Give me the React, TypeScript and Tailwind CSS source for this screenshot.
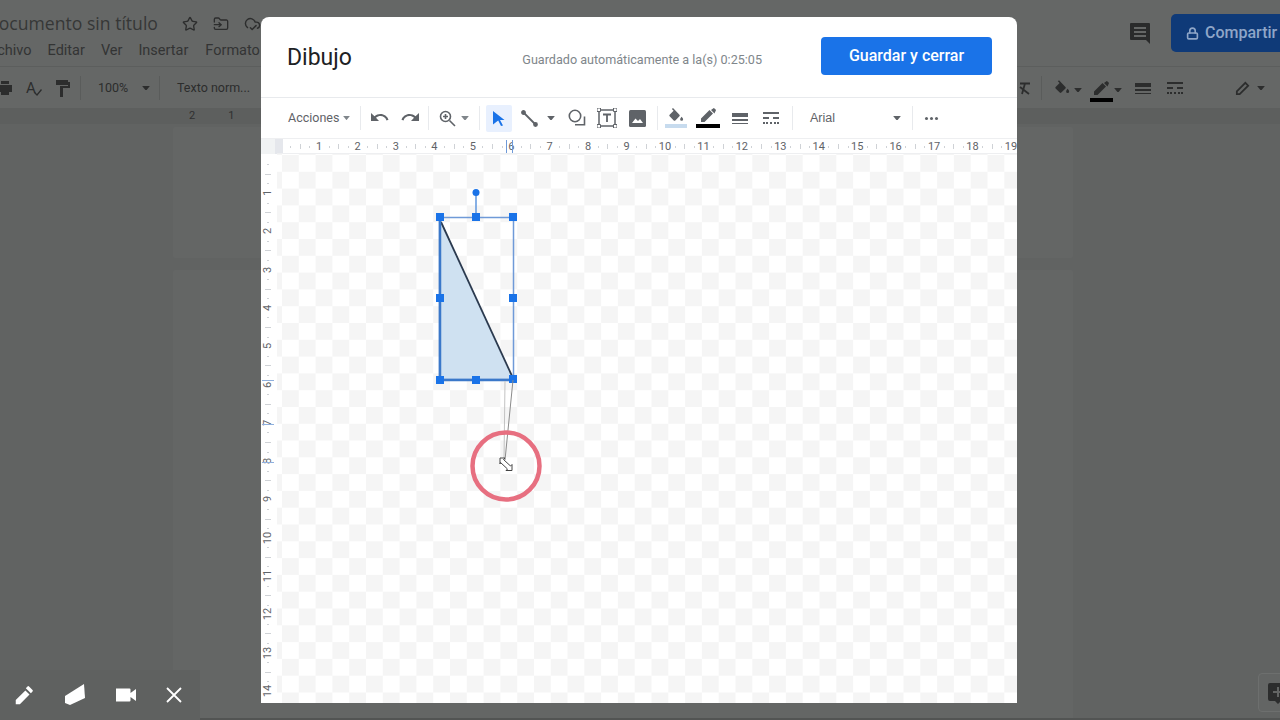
import { Star, FolderInput, CloudCheck, Lock } from 'lucide-react'

const caret = (color: string, w = 8) => (
  <svg width={w} height={w * 0.6} viewBox="0 0 8 5" className="shrink-0">
    <path d="M0 0h8L4 5z" fill={color} />
  </svg>
)

const hRuler = Array.from({ length: 19 }, (_, i) => i + 1)
const hTicks = Array.from({ length: 19 }, (_, i) => i)
const vRuler = Array.from({ length: 14 }, (_, i) => i + 1)

function Sep({ dark }: { dark?: boolean }) {
  return <div className={`w-px h-6 shrink-0 ${dark ? 'bg-[#5a5c5b]' : 'bg-[#e8eaed]'}`} />
}

function DocsBehind() {
  return (
    <div className="w-[1280px] h-[720px] overflow-hidden bg-[#616362] flex flex-col font-['Roboto',sans-serif] text-[#2c2d2d]">
      {/* Docs header */}
      <div className="h-[67px] shrink-0 bg-[#656766] flex items-start border-b border-[#5c5e5d]">
        <div>
          <div className="flex items-center h-[46px] pt-[1px]">
            <span className="ml-[-14px] text-[17.6px] leading-none text-[#363737] font-['Open_Sans',sans-serif] whitespace-nowrap">Documento sin título</span>
            <Star size={16} className="ml-[24px]" color="#2c2d2d" />
            <FolderInput size={16} className="ml-[15px]" color="#2c2d2d" />
            <CloudCheck size={17} className="ml-[15px]" color="#2c2d2d" />
          </div>
          <div className="flex items-center gap-[16px] text-[14.5px] leading-none -ml-[17px] -mt-[2px] text-[#333434]">
            <span>Archivo</span>
            <span>Editar</span>
            <span>Ver</span>
            <span>Insertar</span>
            <span className="ml-[1px]">Formato</span>
          </div>
        </div>
        <svg width="22" height="22" viewBox="0 0 22 22" fill="#2a2b2b" className="ml-auto mt-[22px] shrink-0">
          <path d="M2 1h18a1 1 0 0 1 1 1v20l-4-4H2a1 1 0 0 1-1-1V2a1 1 0 0 1 1-1z" />
          <path d="M5 5h12v2H5zM5 9h12v2H5zM5 13h12v2H5z" fill="#656766" />
        </svg>
        <div className="ml-[20px] mr-[-21px] mt-[14px] w-[130px] shrink-0 h-[38px] rounded-[5px] bg-[#0f3a78] flex items-center pl-[15px] gap-[6px] text-[#8fa6c8] text-[16px] font-medium">
          <Lock size={13} strokeWidth={3} />
          <span>Compartir</span>
        </div>
      </div>
      {/* Docs toolbar */}
      <div className="h-[41px] shrink-0 bg-[#656766] flex items-center text-[#2c2d2d] text-[12.5px] pt-[1px]">
        <svg width="14" height="14" viewBox="0 0 14 14" className="ml-[-2px] shrink-0" fill="#2c2d2d">
          <path d="M0 4h14v7h-3v3H3v-3H0zM3 0h8v3H3z" />
        </svg>
        <span className="ml-[14px] text-[15px] leading-none w-[9px]">A</span>
        <svg width="8" height="7" viewBox="0 0 8 7" className="mt-[9px] ml-[-1px] shrink-0" fill="none" stroke="#2c2d2d" strokeWidth="1.300">
          <path d="M.5 3.500 3 6l4.500-5.500" />
        </svg>
        <svg width="14" height="17" viewBox="0 0 14 17" className="ml-[14px] shrink-0" fill="#2c2d2d">
          <path d="M0 0h12v2h2v6H7v9H4V6h8V5H0z" />
        </svg>
        <div className="ml-[10px]"><Sep dark /></div>
        <span className="ml-[17px] w-[32px]">100%</span>
        <span className="ml-[12px]">{caret('#2c2d2d')}</span>
        <div className="ml-[9px]"><Sep dark /></div>
        <span className="ml-[17px]">Texto norm...</span>

        <div className="ml-auto flex items-center pr-[15px]">
          <svg width="11" height="13" viewBox="0 0 11 13" stroke="#2c2d2d" strokeWidth="1.800" fill="none" className="shrink-0">
            <path d="M1 1.500h10M6 1.500 3 12M1 5l9 7" />
          </svg>
          <div className="ml-[11px]"><Sep dark /></div>
          <svg width="18" height="16" viewBox="0 0 24 21" fill="#2c2d2d" className="ml-[11px] shrink-0">
            <path d="M16.600 9 8 0 6.500 1.400l2.300 2.300-5.300 5.300a1.500 1.500 0 0 0 0 2.100l5.500 5.400a1.500 1.500 0 0 0 2.100 0l5.500-5.400a1.500 1.500 0 0 0 0-2.100zM19.500 11.500s-2 2.200-2 3.500a2 2 0 0 0 4 0c0-1.300-2-3.500-2-3.500z" />
          </svg>
          <span className="ml-[3px] mt-[4px]">{caret('#2c2d2d')}</span>
          <div className="ml-[8px] mt-[6px] w-[23px] shrink-0 flex flex-col items-center gap-[3px]">
            <svg width="15" height="14" viewBox="0 0 15 14" fill="#2c2d2d">
              <path d="M0 10.500V14h3.500L12 5.500 8.500 2zM14.600 2.900a1 1 0 0 0 0-1.400L13.500.4a1 1 0 0 0-1.400 0L10 2l3.500 3.500z" />
            </svg>
            <div className="w-[23px] h-[4px] bg-black" />
          </div>
          <span className="ml-[1px] mt-[4px]">{caret('#2c2d2d')}</span>
          <div className="ml-[13px] w-[16px] shrink-0 flex flex-col gap-[2px]">
            <div className="h-[4px] bg-[#2c2d2d]" />
            <div className="h-[2px] bg-[#2c2d2d]" />
            <div className="h-px bg-[#2c2d2d]" />
          </div>
          <div className="ml-[16px] w-[16px] shrink-0 flex flex-col gap-[3px]">
            <div className="h-[2px] bg-[#2c2d2d]" />
            <div className="border-t-2 border-dashed border-[#2c2d2d]" />
            <div className="border-t-2 border-dotted border-[#2c2d2d]" />
          </div>
          <svg width="17" height="17" viewBox="0 0 24 24" fill="none" stroke="#2c2d2d" strokeWidth="2.500" className="ml-[51px] shrink-0">
            <path d="M4 20v-4L16 4l4 4L8 20z" />
          </svg>
          <span className="ml-[6px]">{caret('#2c2d2d')}</span>
        </div>
      </div>
      {/* Ruler strip */}
      <div className="h-[16px] shrink-0 bg-[#5d5f5e] flex items-center text-[11px] text-[#2f3030] pl-[189px] gap-[33px]">
        <span>2</span>
        <span>1</span>
      </div>
      {/* Doc pages */}
      <div className="flex-1 relative flex flex-col pl-[173px] pr-[207px]">
        <div className="mt-[3px] h-[131px] bg-[#646665] rounded-[2px] shrink-0" />
        <div className="mt-[12px] flex-1 bg-[#646665] rounded-t-[2px]" />
        <div className="absolute left-0 bottom-[-2px] w-[200px] h-[50px] bg-[#5f6160] flex items-center pl-[13px] gap-[29px]">
          <svg width="22" height="22" viewBox="0 0 24 24" fill="#fff">
            <path d="M3 17.500V22h4.500L18 11.500 13.500 7zM21.300 8.200a1.200 1.200 0 0 0 0-1.700l-3.800-3.800a1.200 1.200 0 0 0-1.700 0L14 4.500l5.500 5.500z" />
          </svg>
          <svg width="22" height="22" viewBox="0 0 22 22" fill="#fff">
            <path d="M1 12 20 0l1 14-15 7-5-2z" />
          </svg>
          <svg width="22" height="16" viewBox="0 0 22 16" fill="#fff">
            <path d="M1 1.500h13.500a1 1 0 0 1 1 1V6L21 2v12l-5.500-4v3.500a1 1 0 0 1-1 1H1z" />
          </svg>
          <svg width="16" height="16" viewBox="0 0 16 16" stroke="#fff" strokeWidth="1.800">
            <path d="M1 1l14 14M15 1 1 15" />
          </svg>
        </div>
        <div className="absolute right-[-20px] bottom-[6px] w-[42px] h-[39px] border border-[#6d6f6e] bg-[#636564] flex pl-[9px] pt-[9px] rounded-sm">
          <svg width="20" height="21" viewBox="0 0 20 21" fill="#2c2d2d" className="shrink-0">
            <path d="M2 0h16a2 2 0 0 1 2 2v14a2 2 0 0 1-2 2h-5l-3 3-3-3H2a2 2 0 0 1-2-2V2a2 2 0 0 1 2-2z" />
            <path d="M9 4h2v4h4v2h-4v4H9v-4H5V8h4z" fill="#636564" />
          </svg>
        </div>
      </div>
      <div className="h-[2px] shrink-0 bg-[#525453]" />
    </div>
  )
}

function DrawingTool() {
  return (
    <div className="absolute left-[261px] top-[17px] w-[756px] h-[686px] bg-white rounded-t-lg overflow-hidden flex flex-col font-['Roboto',sans-serif]">
      {/* Title row */}
      <div className="h-[81px] shrink-0 flex items-center pl-[26px] pr-[25px] border-b border-[#e8eaed]">
        <span className="text-[23px] text-[#202124] leading-none">Dibujo</span>
        <span className="ml-auto text-[12.6px] text-[#80868b] mt-[7px]">Guardado automáticamente a la(s) 0:25:05</span>
        <button className="ml-[59px] w-[171px] h-[38px] bg-[#1a73e8] rounded-[4px] text-white text-[16px] font-medium -mt-[3px]">Guardar y cerrar</button>
      </div>

      {/* Toolbar */}
      <div className="h-[41px] shrink-0 flex items-center text-[#5f6368] border-b border-[#eeeff1]">
        <span className="ml-[27px] w-[52px] text-[12.5px] text-[#5f6368]">Acciones</span>
        <span className="ml-[3px]">{caret('#80868b', 7)}</span>
        <div className="ml-[10px]"><Sep /></div>
        <svg width="18" height="10" viewBox="0 0 18 10" className="ml-[10px] shrink-0" fill="#5f6368">
          <path d="M3.500 3.200C5.200 1.800 7.200 1 9.500 1c3.600 0 6.800 2.300 8 5.700l-2 .700C14.600 4.800 12.300 3 9.500 3 7.800 3 6.300 3.600 5 4.700L8 8H0V0z" />
        </svg>
        <svg width="18" height="10" viewBox="0 0 18 10" className="ml-[12px] shrink-0" fill="#5f6368">
          <path d="M14.500 3.200C12.800 1.800 10.800 1 8.500 1 4.900 1 1.700 3.300.5 6.700l2 .700C3.400 4.800 5.700 3 8.500 3c1.700 0 3.200.6 4.500 1.700L10 8h8V0z" />
        </svg>
        <div className="ml-[9px]"><Sep /></div>
        <svg width="17" height="17" viewBox="0 0 17 17" className="ml-[10px] shrink-0" fill="none" stroke="#5f6368" strokeWidth="1.600">
          <circle cx="6.500" cy="6.500" r="5" />
          <path d="M10.500 10.500 16 16M6.500 4v5M4 6.500h5" />
        </svg>
        <span className="ml-[5px]">{caret('#80868b')}</span>
        <div className="ml-[10px]"><Sep /></div>
        <div className="ml-[6px] w-[26px] h-[27px] shrink-0 bg-[#e8f0fe] rounded-[2px] flex items-center justify-center">
          <svg width="12" height="15" viewBox="0 0 12 15" fill="#1a73e8">
            <path d="M0 0l11.500 9H7l3 5.500-2 .5-2.800-5.500L0 13.500z" />
          </svg>
        </div>
        <svg width="17" height="17" viewBox="0 0 17 17" className="ml-[9px] shrink-0" stroke="#5f6368" strokeWidth="1.800">
          <path d="M2 2l13 13" />
          <circle cx="2.500" cy="2.500" r="1.500" fill="#5f6368" />
          <circle cx="14.500" cy="14.500" r="1.500" fill="#5f6368" />
        </svg>
        <span className="ml-[9px]">{caret('#5f6368')}</span>
        <svg width="18" height="18" viewBox="0 0 18 18" className="ml-[13px] shrink-0" fill="none" stroke="#5f6368" strokeWidth="1.600">
          <circle cx="7" cy="7" r="5.700" />
          <path d="M7 15.800h9.500V7.500" />
        </svg>
        <svg width="20" height="20" viewBox="0 0 20 20" className="ml-[11px] shrink-0" fill="none" stroke="#5f6368" strokeWidth="1.500">
          <rect x="2" y="2" width="16" height="16" />
          <path d="M6 6.500h8M10 6.500V14" strokeWidth="1.800" />
          <path d="M0 0h3.500v3.500H0zM16.500 0H20v3.500h-3.500zM0 16.500h3.500V20H0zM16.500 16.500H20V20h-3.500z" fill="#fff" strokeWidth="1" />
        </svg>
        <svg width="17" height="17" viewBox="0 0 17 17" className="ml-[12px] shrink-0">
          <rect width="17" height="17" rx="1.500" fill="#5f6368" />
          <path d="M3 13l3.500-4.500 2.500 2.500 2-2 3 4z" fill="#fff" />
        </svg>
        <div className="ml-[11px]"><Sep /></div>
        <div className="ml-[7px] flex flex-col items-center w-[22px] shrink-0">
          <svg width="18" height="15" viewBox="0 0 24 20" fill="#5f6368">
            <path d="M16.600 9 8 0 6.500 1.400l2.300 2.300-5.300 5.300a1.500 1.500 0 0 0 0 2.100l5.500 5.400a1.500 1.500 0 0 0 2.100 0l5.500-5.400a1.500 1.500 0 0 0 0-2.100zM19.500 11.500s-2 2.200-2 3.500a2 2 0 0 0 4 0c0-1.300-2-3.500-2-3.500z" />
          </svg>
          <div className="w-[22px] h-[4px] mt-[1px] bg-[#c7dbee]" />
        </div>
        <div className="ml-[9px] flex flex-col items-center w-[24px] shrink-0">
          <svg width="15" height="14" viewBox="0 0 15 14" fill="#5f6368">
            <path d="M0 10.500V14h3.500L12 5.500 8.500 2zM14.600 2.900a1 1 0 0 0 0-1.400L13.500.4a1 1 0 0 0-1.400 0L10 2l3.500 3.500z" />
          </svg>
          <div className="w-[24px] h-[4px] mt-[2px] bg-black" />
        </div>
        <div className="ml-[12px] w-[16px] shrink-0 flex flex-col gap-[2px]">
          <div className="h-[4px] bg-[#5f6368]" />
          <div className="h-[2px] bg-[#5f6368]" />
          <div className="h-px bg-[#5f6368]" />
        </div>
        <div className="ml-[15px] w-[16px] shrink-0 flex flex-col gap-[3px]">
          <div className="h-[2px] bg-[#5f6368]" />
          <div className="border-t-2 border-dashed border-[#5f6368]" />
          <div className="border-t-2 border-dotted border-[#5f6368]" />
        </div>
        <div className="ml-[13px]"><Sep /></div>
        <span className="ml-[17px] w-[83px] shrink-0 text-[12.5px] text-[#5f6368] font-['Liberation_Sans',sans-serif]">Arial</span>
        {caret('#5f6368')}
        <div className="ml-[11px]"><Sep /></div>
        <div className="ml-[12px] flex gap-[2px]">
          <div className="w-[3px] h-[3px] rounded-full bg-[#5f6368]" />
          <div className="w-[3px] h-[3px] rounded-full bg-[#5f6368]" />
          <div className="w-[3px] h-[3px] rounded-full bg-[#5f6368]" />
        </div>
      </div>

      {/* Rulers and canvas */}
      <div className="flex-1 grid grid-cols-[16px_1fr] grid-rows-[15px_1fr] min-h-0">
        <div className="bg-[#f1f3f4] border-r-2 border-[#e5e7ec]" />
        <div className="bg-white relative overflow-hidden border-b border-[#eeeff1]">
          <div className="absolute left-0 top-0 w-[6px] h-full bg-[#e5e7ec]" />
          {hRuler.map((n) => (
            <span
              key={n}
              className="absolute top-0 w-[38px] text-center text-[11px] leading-[15px] text-[#5f6368]"
              style={{ left: n * 38.44 - 15.4 }}
            >
              {n}
            </span>
          ))}
          {hTicks.map((n) => (
            <div key={n}>
              <div className="absolute top-[5px] w-px h-[5px] bg-[#cfd2d6]" style={{ left: n * 38.44 + 22.8 }} />
              <div className="absolute top-[7px] w-px h-[2px] bg-[#cfd2d6]" style={{ left: n * 38.44 + 13.2 }} />
              <div className="absolute top-[7px] w-px h-[2px] bg-[#cfd2d6]" style={{ left: n * 38.44 + 32.4 }} />
            </div>
          ))}
          <div className="absolute left-[229px] top-[1px] w-[7px] h-[13px] border-x border-[#6f9ad8]" />
        </div>
        <div className="bg-white relative overflow-hidden">
          {vRuler.map((n) => (
            <span
              key={n}
              className="absolute left-0 w-[14px] text-center text-[11px] leading-[14px] text-[#5f6368] -rotate-90"
              style={{ top: n * 38.3 - 6.3 }}
            >
              {n}
            </span>
          ))}
          {vRuler.map((n) => (
            <div key={n}>
              <div className="absolute left-[4px] w-[6px] h-px bg-[#cfd2d6]" style={{ top: n * 38.3 - 18.5 }} />
              <div className="absolute left-[6px] w-[2px] h-px bg-[#cfd2d6]" style={{ top: n * 38.3 - 28.1 }} />
              <div className="absolute left-[6px] w-[2px] h-px bg-[#cfd2d6]" style={{ top: n * 38.3 - 8.9 }} />
            </div>
          ))}
          <div className="absolute left-[1px] top-[226px] w-[12px] h-px bg-[#8fb0de]" />
          <div className="absolute left-[1px] top-[270px] w-[12px] h-px bg-[#8fb0de]" />
          <div className="absolute left-[1px] top-[308px] w-[12px] h-px bg-[#8fb0de]" />
        </div>
        <div className="relative overflow-hidden bg-[repeating-conic-gradient(#f5f5f5_0_25%,#ffffff_0_50%)] bg-[length:33.6px_33.6px] bg-[position:-11.8px_1px]">
          <svg width="740" height="550" viewBox="0 0 740 550" className="absolute left-0 top-0">
            <g transform="translate(-277 -154)">
              <path d="M440 218V380H513z" fill="#cfe1f1" />
              <path d="M441 222 512 376" stroke="#2b3a4f" strokeWidth="1.800" fill="none" />
              <rect x="439.500" y="217.500" width="74" height="162" fill="none" stroke="#6f9ad8" strokeWidth="1.500" />
              <path d="M440 218V380H513" fill="none" stroke="#3b78c9" strokeWidth="2.500" />
              <path d="M476 193V217" stroke="#5f96dc" strokeWidth="1.500" />
              <circle cx="476" cy="192.500" r="3.500" fill="#1a73e8" />
              {[[440, 217], [476, 217], [513, 217], [440, 298], [513, 298], [440, 380], [476, 380], [513, 379]].map(([x, y]) => (
                <rect key={`${x}-${y}`} x={x - 4} y={y - 4} width="8" height="8" fill="#1a73e8" />
              ))}
              <path d="M505 381 504 460" stroke="#c3c3c3" strokeWidth="1" />
              <path d="M513 380 505 460" stroke="#8b8b8b" strokeWidth="1" />
              <circle cx="506" cy="466" r="33.500" fill="none" stroke="#e76f80" strokeWidth="4.500" />
              <path d="M500 458h5l-1.500 1.500 7 6.500 1.500-1.500v6h-6l1.500-1.500-7-6.500L500 464z" fill="#fff" stroke="#444" strokeWidth="1" />
            </g>
          </svg>
        </div>
      </div>
    </div>
  )
}

export default function App() {
  return (
    <div className="relative w-[1280px] h-[720px] overflow-hidden">
      <DocsBehind />
      <DrawingTool />
    </div>
  )
}
